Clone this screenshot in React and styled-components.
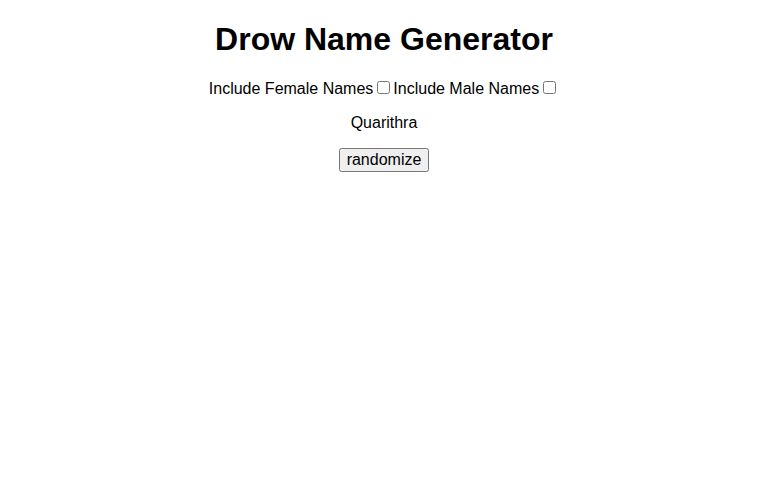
import React, { useState } from 'react'
import styled, { createGlobalStyle } from 'styled-components'

const GlobalStyle = createGlobalStyle`
  body {
    margin: 0;
    font-family: "Liberation Sans", Arial, sans-serif;
    background: #fff;
    color: #000;
  }
`

const Page = styled.div`
  padding: 0 8px;
  text-align: center;
`

const Title = styled.h1`
  font-size: 32px;
  font-weight: 700;
  margin: 21.44px 0 19.5px;
`

const Row = styled.p`
  font-size: 16px;
  margin: 16px 0;
`

const Check = styled.input`
  margin: 3px 3px 3px 4px;
`

const Button = styled.button`
  font-family: "Liberation Sans", Arial, sans-serif;
  font-size: 16px;
  padding: 1px 6px;
`

const female = ['Quarithra', 'Viconia', 'Zesstra', 'Ilphrin', 'Shyntlara']
const male = ['Drizzt', 'Jarlaxle', 'Zaknafein', 'Pharaun', 'Ryld']

const App = () => {
  const [useFemale, setUseFemale] = useState(false)
  const [useMale, setUseMale] = useState(false)
  const [name, setName] = useState('Quarithra')

  const randomize = () => {
    let pool = []
    if (useFemale) pool = pool.concat(female)
    if (useMale) pool = pool.concat(male)
    if (!pool.length) pool = female.concat(male)
    setName(pool[Math.floor(Math.random() * pool.length)])
  }

  return (
    <Page>
      <GlobalStyle />
      <Title>Drow Name Generator</Title>
      <Row>
        Include Female Names
        <Check type="checkbox" checked={useFemale} onChange={() => setUseFemale(!useFemale)} />
        Include Male Names
        <Check type="checkbox" checked={useMale} onChange={() => setUseMale(!useMale)} />
      </Row>
      <Row>{name}</Row>
      <Row>
        <Button onClick={randomize}>randomize</Button>
      </Row>
    </Page>
  )
}

export default App
